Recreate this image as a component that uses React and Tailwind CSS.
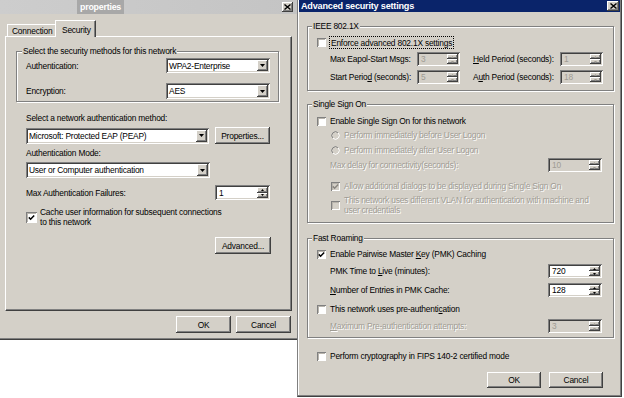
import React from "react";

const RAISED =
  "shadow-[inset_-1px_-1px_0_#404040,inset_1px_1px_0_#fff,inset_-2px_-2px_0_#808080]";
const SUNKEN =
  "shadow-[inset_1px_1px_0_#808080,inset_-1px_-1px_0_#fff,inset_2px_2px_0_#404040,inset_-2px_-2px_0_#d4d0c8]";
const BOX =
  "shadow-[inset_1px_1px_0_#808080,inset_-1px_-1px_0_#fff,inset_2px_2px_0_#b8b4ac]";
const DIM = "text-[#a09c94] [text-shadow:1px_1px_0_#fff]";

function Button({ children, className = "" }) {
  return (
    <div className={`flex items-center justify-center bg-[#d4d0c8] ${RAISED} ${className}`}>
      {children}
    </div>
  );
}

function CloseBtn({ className = "" }) {
  return (
    <div className={`flex items-center justify-center bg-[#d4d0c8] ${RAISED} ${className}`}>
      <svg width="7" height="6" viewBox="0 0 7 6">
        <path d="M0.5 0.5L6.5 5.5M6.5 0.5L0.5 5.5" stroke="#000" strokeWidth="1.4" />
      </svg>
    </div>
  );
}

function Dropdown({ value, className = "" }) {
  return (
    <div className={`flex items-center bg-white p-[2px] ${SUNKEN} ${className}`}>
      <span className="flex-1 pl-[1px] whitespace-nowrap">{value}</span>
      <span className={`w-[11px] h-full flex items-center justify-center bg-[#d4d0c8] ${RAISED}`}>
        <svg width="5" height="3" viewBox="0 0 5 3">
          <path d="M0 0H5L2.5 3Z" fill="#000" />
        </svg>
      </span>
    </div>
  );
}

function Spinner({ value, disabled, className = "" }) {
  const arrow = disabled ? "#a09c94" : "#000";
  return (
    <div
      className={`flex items-stretch p-[2px] ${disabled ? "bg-[#d4d0c8]" : "bg-white"} ${SUNKEN} ${className}`}
    >
      <span className={`flex-1 self-center pl-[2px] ${disabled ? "text-[#a09c94]" : ""}`}>{value}</span>
      <span className="w-[11px] flex flex-col">
        <span className={`flex-1 flex items-center justify-center bg-[#d4d0c8] ${RAISED}`}>
          <svg width="3" height="2" viewBox="0 0 3 2">
            <path d="M1.5 0L3 2H0Z" fill={arrow} />
          </svg>
        </span>
        <span className={`flex-1 flex items-center justify-center bg-[#d4d0c8] ${RAISED}`}>
          <svg width="3" height="2" viewBox="0 0 3 2">
            <path d="M0 0H3L1.5 2Z" fill={arrow} />
          </svg>
        </span>
      </span>
    </div>
  );
}

function Check({ checked, disabled, size = "w-[9px] h-[9px]" }) {
  return (
    <span
      className={`${size} shrink-0 flex items-center justify-center ${disabled ? "bg-[#d4d0c8]" : "bg-white"} ${BOX}`}
    >
      {checked && (
        <svg width="7" height="7" viewBox="0 0 7 7">
          <path
            d="M0.8 3.4L2.6 5.2L6.2 1.4"
            stroke={disabled ? "#8a8680" : "#000"}
            strokeWidth="1.5"
            fill="none"
          />
        </svg>
      )}
    </span>
  );
}

function Radio() {
  return (
    <svg width="9" height="9" viewBox="0 0 12 12" className="shrink-0">
      <circle cx="6" cy="6" r="5" fill="#d4d0c8" />
      <path d="M9.54 2.46A5 5 0 0 0 2.46 9.54" stroke="#808080" strokeWidth="1.3" fill="none" />
      <path d="M2.46 9.54A5 5 0 0 0 9.54 2.46" stroke="#fff" strokeWidth="1.3" fill="none" />
    </svg>
  );
}

function Group({ title, className = "", legendClass = "ml-[4px]", children }) {
  return (
    <fieldset
      className={`border border-[#808080] shadow-[1px_1px_0_#fff,inset_1px_1px_0_#fff] ${className}`}
    >
      <legend className={`${legendClass} px-[1px] leading-[9px] bg-[#d4d0c8]`}>{title}</legend>
      {children}
    </fieldset>
  );
}

function LeftWindow() {
  return (
    <div className="w-[297px] h-[340px] bg-[#d4d0c8] flex flex-col border-b border-[#404040] shadow-[inset_0_-1px_0_#808080]">
      <div className="h-[14px] flex items-center bg-gradient-to-r from-[#cdcdcd] to-[#c4c4c4]">
        <div className="w-[77px]" />
        <div className="h-full px-[3px] bg-[#a8a8a8] flex items-center text-white font-bold text-[8.8px]">
          properties
        </div>
        <div className="flex-1" />
        <CloseBtn className="w-[11px] h-[10px] mr-[4px]" />
      </div>

      <div className="mt-[6px] ml-[5px] h-[17px] -mb-px flex items-end relative z-10">
        <div className="ml-[2px] mb-px h-[12px] w-[50px] pl-[4px] flex items-center whitespace-nowrap border-t border-l border-white border-r border-r-[#404040]">
          Connection
        </div>
        <div className="-ml-[2px] h-[17px] w-[41px] pl-[6px] pt-[2px] flex items-center bg-[#d4d0c8] border-t border-l border-white border-r border-r-[#404040] shadow-[inset_-1px_0_0_#808080]">
          Security
        </div>
      </div>

      <div className="ml-[5px] w-[287px] h-[275px] flex flex-col border border-t-white border-l-white border-r-[#404040] border-b-[#404040] shadow-[inset_-1px_-1px_0_#808080]">
        <Group
          title="Select the security methods for this network"
          className="mt-[10px] ml-[10px] w-[263px] pb-[2px]"
          legendClass="ml-[5px]"
        >
          <div className="mt-[2px] flex items-center justify-between pl-[9px] pr-[8px]">
            <span>Authentication:</span>
            <Dropdown value="WPA2-Enterprise" className="w-[104px] h-[15px]" />
          </div>
          <div className="mt-[10px] flex items-center justify-between pl-[9px] pr-[8px]">
            <span>Encryption:</span>
            <Dropdown value="AES" className="w-[104px] h-[16px]" />
          </div>
        </Group>

        <div className="ml-[20px] w-[245px] flex flex-col">
          <div className="mt-[11px]">Select a network authentication method:</div>
          <div className="mt-[4px] h-[17px] flex items-center gap-[6px]">
            <Dropdown value="Microsoft: Protected EAP (PEAP)" className="w-[183px] h-[16px]" />
            <Button className="w-[55px] h-[17px]">Properties...</Button>
          </div>
          <div className="mt-[4px]">Authentication Mode:</div>
          <Dropdown value="User or Computer authentication" className="mt-[4px] w-[184px] h-[16px]" />
          <div className="mt-[7px] h-[15px] flex items-center justify-between pr-[1px]">
            <span>Max Authentication Failures:</span>
            <Spinner value="1" className="w-[55px] h-[15px]" />
          </div>
          <div className="mt-[7px] flex items-center gap-[3px]">
            <Check checked size="w-[11px] h-[11px]" />
            <span>
              Cache user information for subsequent connections
              <br />
              to this network
            </span>
          </div>
          <Button className="mt-[10px] self-end w-[56px] h-[17px]">Advanced...</Button>
        </div>
      </div>

      <div className="mt-[5px] pr-[6px] flex justify-end gap-[5px]">
        <Button className="w-[55px] h-[17px]">OK</Button>
        <Button className="w-[55px] h-[17px]">Cancel</Button>
      </div>
    </div>
  );
}

function CheckRow({ checked, disabled, children, className = "", indent = "ml-[9px]" }) {
  return (
    <div className={`h-[12px] flex items-center gap-[4px] ${indent} ${className}`}>
      <Check checked={checked} disabled={disabled} />
      <span className={disabled ? DIM : ""}>{children}</span>
    </div>
  );
}

function SpinRow({ label, value, disabled, className = "" }) {
  return (
    <div className={`h-[14px] ml-[22px] mr-[11px] flex items-center justify-between ${className}`}>
      <span className={disabled ? DIM : ""}>{label}</span>
      <Spinner value={value} disabled={disabled} className="w-[54px] h-[14px]" />
    </div>
  );
}

function RightWindow() {
  return (
    <div className="w-[325px] h-[397px] shrink-0 bg-[#d4d0c8] flex flex-col border-l border-l-[#808080] border-r border-r-[#404040] border-b border-b-[#404040] shadow-[inset_-1px_-1px_0_#808080,inset_1px_0_0_#fff]">
      <div className="ml-[1px] mr-[1px] h-[12px] bg-[#0a246a] flex items-center">
        <span className="pl-[2px] text-white font-bold text-[9.1px] whitespace-nowrap">
          Advanced security settings
        </span>
        <div className="flex-1" />
        <CloseBtn className="w-[12px] h-[10px] mr-[1px]" />
      </div>

      <div className="ml-[9px] w-[307px] flex flex-col">
        <Group title="IEEE 802.1X" className="mt-[10px] pb-[6px]">
          <div className="mt-[5px] ml-[9px] h-[13px] flex items-center gap-[3px]">
            <Check />
            <span className="h-[13px] px-[1px] flex items-center border border-dotted border-black">
              Enforce advanced 802.1X settings
            </span>
          </div>
          <div className="mt-[3px] ml-[22px] h-[14px] flex items-center">
            <span className="w-[87px]">Max Eapol-Start Msgs:</span>
            <Spinner value="3" disabled className="w-[43px] h-[14px]" />
            <span className="ml-[13px] w-[87px]">
              <span className="underline">H</span>eld Period (seconds):
            </span>
            <Spinner value="1" disabled className="w-[43px] h-[14px]" />
          </div>
          <div className="mt-[4px] ml-[22px] h-[14px] flex items-center">
            <span className="w-[87px]">
              Start Perio<span className="underline">d</span> (seconds):
            </span>
            <Spinner value="5" disabled className="w-[43px] h-[14px]" />
            <span className="ml-[13px] w-[87px]">
              A<span className="underline">u</span>th Period (seconds):
            </span>
            <Spinner value="18" disabled className="w-[43px] h-[14px]" />
          </div>
        </Group>

        <Group title="Single Sign On" className="mt-[9px] pb-[7px]">
          <CheckRow className="mt-[6px]">Enable Single Sign On for this network</CheckRow>
          <div className="mt-[2px] ml-[23px] h-[12px] flex items-center gap-[4px]">
            <Radio />
            <span className={DIM}>Perform immediately before User Logon</span>
          </div>
          <div className="mt-[3px] ml-[23px] h-[12px] flex items-center gap-[4px]">
            <Radio />
            <span className={DIM}>Perform immediately after User Logon</span>
          </div>
          <SpinRow label="Max delay for connectivity(seconds):" value="10" disabled className="mt-[2px]" />
          <CheckRow checked disabled indent="ml-[23px]" className="mt-[8px]">
            Allow additional dialogs to be displayed during Single Sign On
          </CheckRow>
          <div className="mt-[3px] ml-[23px] flex items-center gap-[4px]">
            <Check disabled />
            <span className={DIM}>
              This network uses different VLAN for authentication with machine and
              <br />
              user credentials
            </span>
          </div>
        </Group>

        <Group title="Fast Roaming" className="mt-[11px] pb-[4px]">
          <CheckRow checked className="mt-[5px]">
            Enable Pairwise Master <span className="underline">K</span>ey (PMK) Caching
          </CheckRow>
          <SpinRow
            label={
              <>
                PMK Time to <span className="underline">L</span>ive (minutes):
              </>
            }
            value="720"
            className="mt-[4px]"
          />
          <SpinRow
            label={
              <>
                <span className="underline">N</span>umber of Entries in PMK Cache:
              </>
            }
            value="128"
            className="mt-[5px]"
          />
          <CheckRow className="mt-[6px]">
            This network uses pre-authenti<span className="underline">c</span>ation
          </CheckRow>
          <SpinRow
            label={
              <>
                <span className="underline">M</span>aximum Pre-authentication attempts:
              </>
            }
            value="3"
            disabled
            className="mt-[4px]"
          />
        </Group>
      </div>

      <CheckRow className="mt-[12px]" indent="ml-[19px]">
        Perform cryptography in FIPS 140-2 certified mode
      </CheckRow>

      <div className="mt-[10px] pr-[18px] flex justify-end gap-[8px]">
        <Button className="w-[54px] h-[16px]">OK</Button>
        <Button className="w-[54px] h-[16px]">Cancel</Button>
      </div>
    </div>
  );
}

export default function App() {
  return (
    <div className="w-[624px] h-[398px] bg-white flex overflow-hidden font-['Liberation_Sans',Arial,sans-serif] text-[8.4px] tracking-[-0.2px] leading-[10px] text-black">
      <div className="w-[297px] shrink-0">
        <LeftWindow />
      </div>
      <RightWindow />
    </div>
  );
}
